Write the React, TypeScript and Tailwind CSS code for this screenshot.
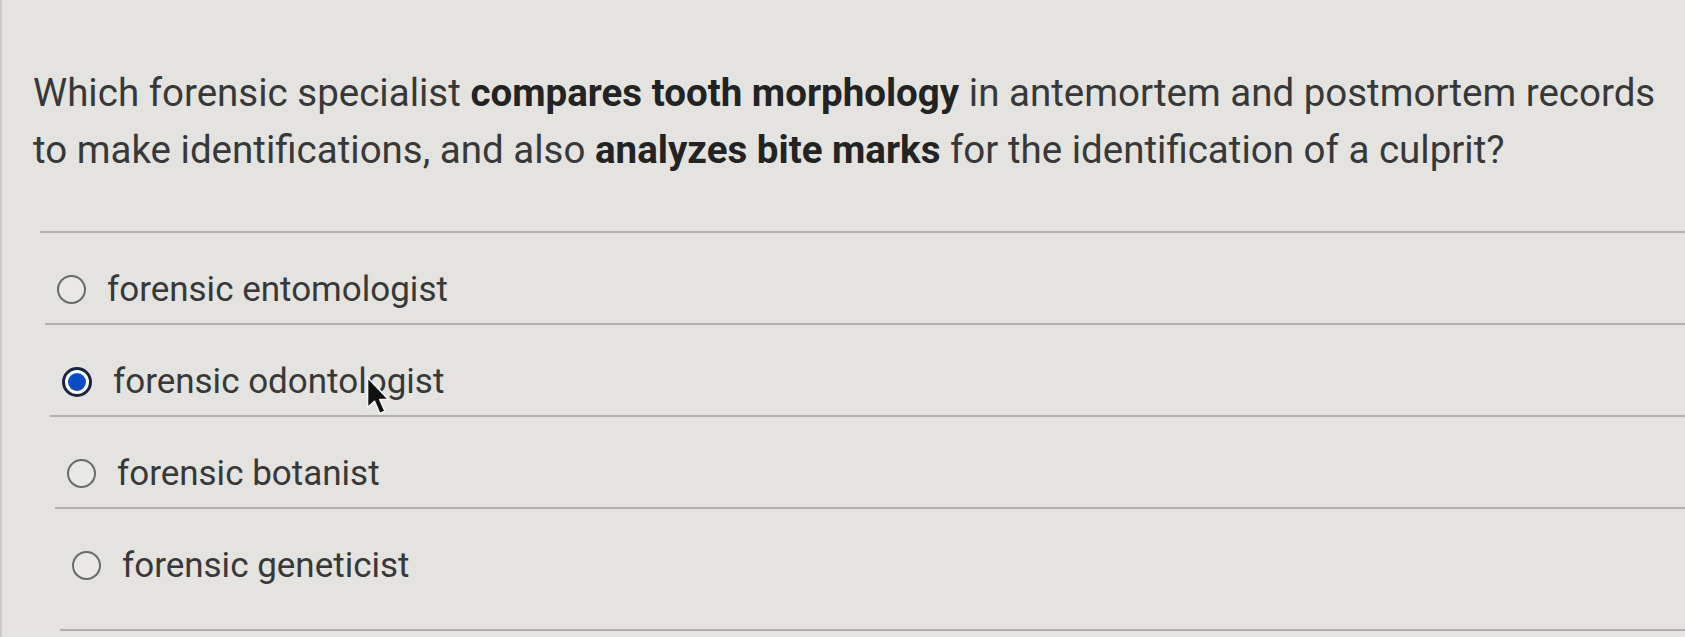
import React from 'react';

const options = [
  { label: 'forensic entomologist', indent: 'ml-[38px]', selected: false },
  { label: 'forensic odontologist', indent: 'ml-[43px]', selected: true },
  { label: 'forensic botanist', indent: 'ml-[48px]', selected: false },
  { label: 'forensic geneticist', indent: 'ml-[53px]', selected: false },
];

function Radio({ checked }: { checked: boolean }) {
  if (checked) {
    return (
      <span className="flex h-[30px] w-[30px] shrink-0 items-center justify-center rounded-full border-[3px] border-[#1b2340] bg-white">
        <span className="h-[18px] w-[18px] rounded-full bg-[#0c4cc4]" />
      </span>
    );
  }
  return <span className="h-[29px] w-[29px] shrink-0 rounded-full border-2 border-[#6a6a68] bg-[#e9e8e5]" />;
}

function Pointer() {
  return (
    <svg width="26" height="42" viewBox="0 0 22 36" className="pointer-events-none absolute left-[363px] top-[375px]">
      <path
        d="M2 2 L2 28 L8 22.5 L12.5 33 L17 31 L12.5 21 L20 21 Z"
        fill="#111"
        stroke="#f4f4f2"
        strokeWidth="1.4"
        strokeLinejoin="round"
      />
    </svg>
  );
}

export default function App() {
  return (
    <div
      className="relative h-[637px] w-[1685px] overflow-hidden border-l-2 border-[#cbcac6] bg-[#e4e3df] text-[#383838]"
      style={{ fontFamily: 'Roboto, "Liberation Sans", sans-serif' }}
    >
      <div className="pl-[31px] pt-[64px] text-[38.5px] leading-[57px]">
        <div className="whitespace-nowrap">
          Which forensic specialist <b className="font-bold text-[#232323]">compares tooth morphology</b> in antemortem and postmortem records
        </div>
        <div className="whitespace-nowrap">
          to make identifications, and also <b className="font-bold text-[#232323]">analyzes bite marks</b> for the identification of a culprit?
        </div>
      </div>

      <div className="mt-[53px]">
        {options.map((opt) => (
          <div
            key={opt.label}
            className={`${opt.indent} flex h-[92px] items-start border-t-2 border-[#b1b0ad] pl-[17px] pt-[39px]`}
          >
            <div className="flex h-[35px] items-center gap-[21px]">
              <Radio checked={opt.selected} />
              <span className="whitespace-nowrap text-[35px] leading-[35px]">{opt.label}</span>
            </div>
          </div>
        ))}
        <div className="ml-[58px] mt-[30px] border-t-2 border-[#b1b0ad]" />
      </div>

      <Pointer />
    </div>
  );
}
